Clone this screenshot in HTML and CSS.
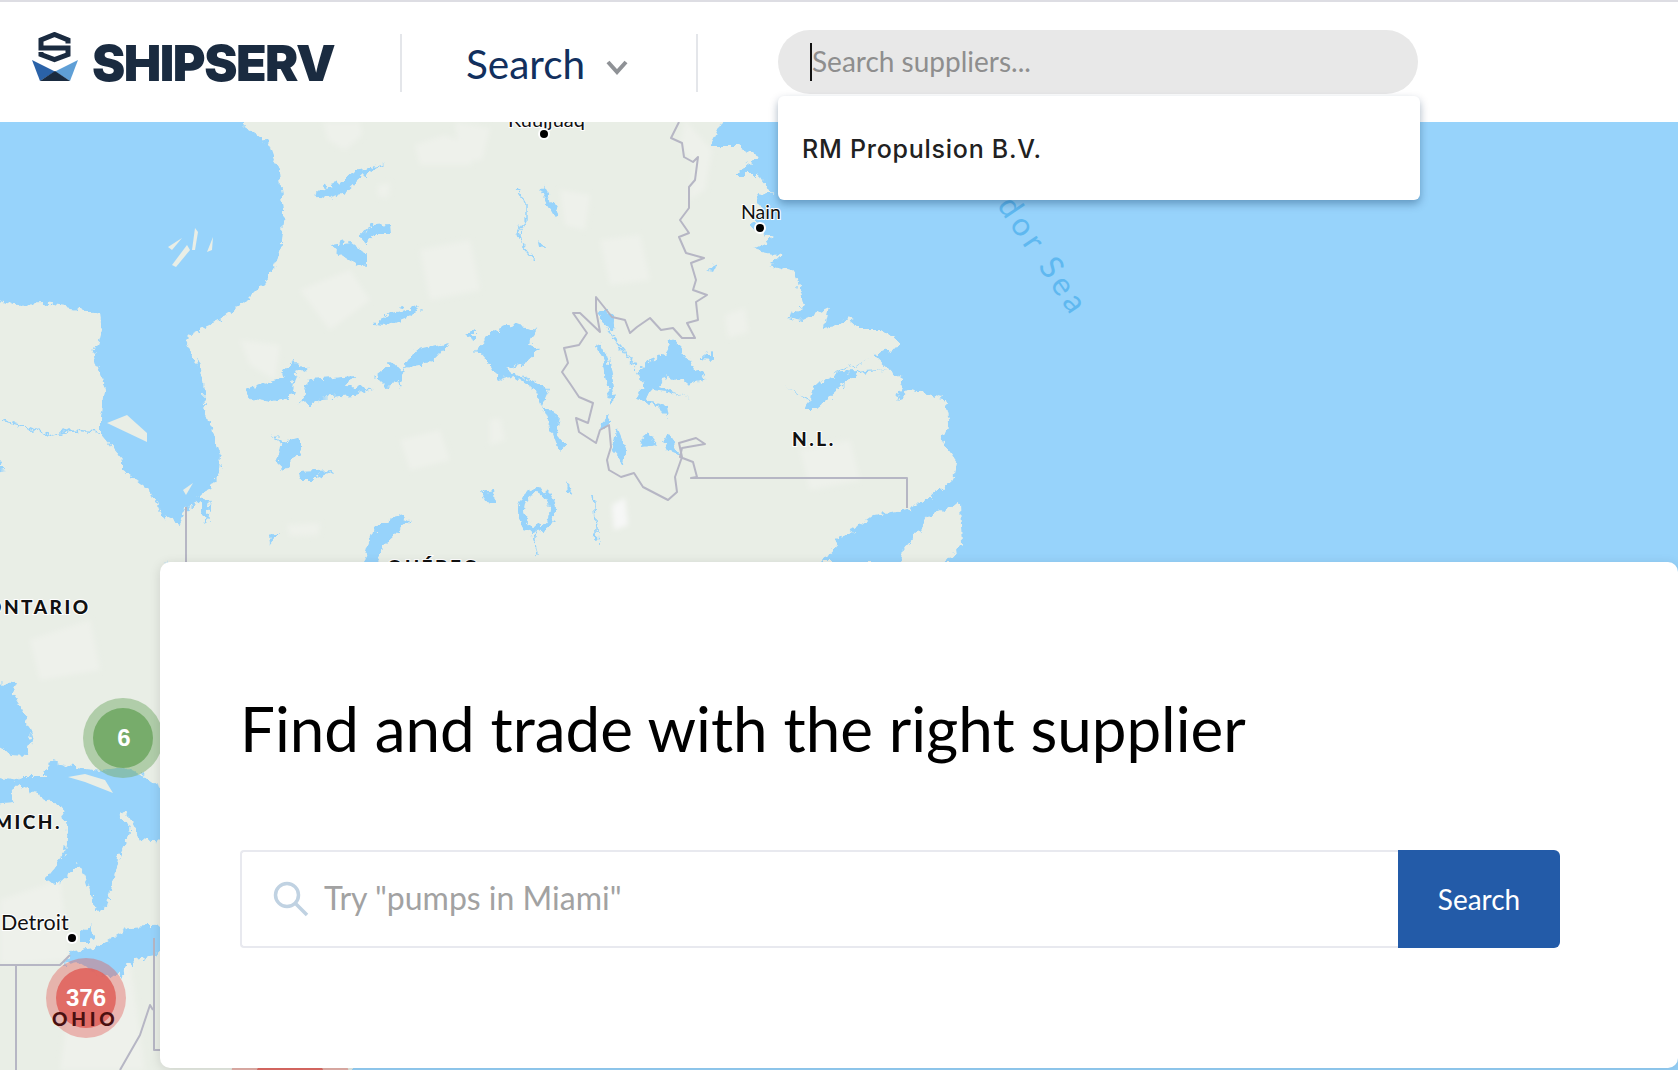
FILE: index.html
```html
<!DOCTYPE html>
<html lang="en">
<head>
<meta charset="utf-8">
<title>ShipServ</title>
<link rel="stylesheet" href="styles.css">
</head>
<body>
<div class="app">
  <header class="header">
    <a class="logo">
      <svg class="logo-mark" viewBox="0 0 46 50" width="46" height="50">
        <path class="lg-line" d="M36 11.500V8L22.500 2.500 9 8V16H36V22.500L22.500 27.500 9 22.500V20"/>
        <path class="lg-blue1" d="M0 28 23 39.500 8 49Z"/>
        <path class="lg-blue2" d="M46 28 23 39.500 38 49Z"/>
        <path class="lg-dark" d="M23 39 38 49H8Z"/>
      </svg>
      <span class="logo-text">SHIPSERV</span>
    </a>
    <div class="nav-cell">
      <span class="nav-label">Search</span>
      <svg class="chev" viewBox="0 0 22 16" width="22" height="16"><path d="M2 3 11 13 20 3"/></svg>
    </div>
    <div class="top-search">
      <div class="pill"><span class="caret"></span><span class="pill-text">Search suppliers...</span></div>
      <div class="dropdown"><span class="dropdown-item">RM Propulsion B.V.</span></div>
    </div>
  </header>
  <main class="stage">
    <svg class="map" viewBox="0 122 1678 948" width="1678" height="948">
      <defs>
        <filter id="rough" filterUnits="userSpaceOnUse" x="-30" y="90" width="1740" height="1010">
          <feTurbulence type="turbulence" baseFrequency="0.09" numOctaves="2" seed="4" result="n"/>
          <feDisplacementMap in="SourceGraphic" in2="n" scale="9" xChannelSelector="R" yChannelSelector="G"/>
        </filter>
        <filter id="soft" filterUnits="userSpaceOnUse" x="-30" y="90" width="1740" height="1010">
          <feGaussianBlur stdDeviation="2.500"/>
        </filter>
      </defs>
      <rect class="land" x="0" y="122" width="1678" height="948"/>
      <g class="patch">
        <path d="M323 122 360 122 362 135 345 150 328 140Z"/>
        <path d="M415 145 445 135 480 150 470 165 420 165Z"/>
        <path d="M455 122 490 128 482 160 460 160Z"/>
        <path d="M378 185 390 183 388 198 378 196Z"/>
        <path d="M287 525 320 523 318 535 290 536Z"/>
        <path d="M490 420 500 418 505 440 490 445Z"/>
        <path d="M725 315 745 308 748 332 728 338Z"/>
        <path d="M685 120 712 150 705 190 688 200 695 165 680 145Z"/>
        <path d="M240 340 280 345 275 380 250 365Z"/>
        <path d="M400 440 440 430 450 460 410 470Z"/>
        <path d="M560 190 590 195 585 230 565 225Z"/>
        <path d="M0 900 60 880 70 960 0 965Z"/>
        <path d="M70 1000 130 960 145 1070 60 1070Z"/>
        <path d="M300 290 350 270 370 300 330 330Z"/>
        <path d="M420 250 470 240 480 290 430 300Z"/>
        <path d="M600 240 640 235 650 280 610 285Z"/>
        <path d="M800 450 850 440 860 480 810 490Z"/>
        <path d="M30 640 90 620 100 670 40 680Z"/>
      </g>
      <path class="patch-bright" d="M612 505 625 498 628 525 614 530Z"/>
      <g class="water">
        <path d="M-20 100H240V122L253 130 267 142 277 170 282 210 278 250 263 280 243 300 217 318 187 332 182 337 188 350 200 367 203 403 210 430 218 453 217 470 207 487 195 493 208 498 205 522 197 500 185 507 177 522 158 513 150 490 120 467 120 457 98 430 98 417 102 387 92 353 99 327 97 312 83 308 43 302 10 303 -20 290Z"/>
        <path d="M729 100H1710V1095H350V1050H1000V562H818L843 533 871 513 907 507 936 490 950 477 954 460 945 447 939 437 948 417 943 397 925 392 907 387 900 395 895 397 904 377 886 367 871 353 896 347 896 338 879 327 854 327 846 313 835 325 820 327 825 306 800 318 784 315 802 303 798 290 793 270 768 263 779 253 750 247 771 237 746 223 760 212 754 190 770 193 757 173 732 173 757 153 736 143 707 143Z"/>
        <path d="M313 192 322 185 340 180 353 168 382 161 363 172 343 190 322 196Z"/>
        <path d="M356 233 370 223 388 222 389 232 373 232 363 241Z"/>
        <path d="M328 242 347 239 365 252 365 263 353 262 337 252Z"/>
        <path d="M373 322 387 310 420 305 413 312 385 323Z"/>
        <path d="M243 388 257 382 277 377 290 360 307 366 293 373 290 387 295 393 267 400 250 397Z"/>
        <path d="M298 402 307 377 330 375 353 373 343 385 370 386 350 393 318 396 307 403Z"/>
        <path d="M373 375 388 362 400 368 413 348 447 340 430 360 403 365 397 383 383 385Z"/>
        <path d="M463 333 472 327 472 338Z"/>
        <path d="M475 348 486 332 507 323 534 328 525 343 536 348 523 360 504 367 534 380 546 387 539 403 557 413 554 430 564 442 557 450 546 420 532 387 511 373 496 377 486 360Z"/>
        <path d="M272 432 280 440 298 435 298 450 283 467 275 460 278 443Z"/>
        <path d="M295 470 332 468 310 478 297 478Z"/>
        <path d="M478 490 492 488 493 503 487 503Z"/>
        <path d="M267 533 278 531 268 543Z"/>
        <path d="M358 570 370 530 393 512 408 518 383 540 370 570Z"/>
        <path d="M158 568 165 557 160 570Z"/>
        <path d="M-20 450 7 467 -20 470Z"/>
        <path d="M636 373 643 360 661 353 671 337 682 350 693 368 705 377 682 382 664 373 657 383 689 397 671 390 650 387 645 398 664 403 666 415 654 403 634 397 641 383Z"/>
        <path d="M698 357 711 348 711 358Z"/>
        <path d="M596 307 604 307 612 318 611 330 602 323Z"/>
        <path d="M598 420 609 410 604 428 597 428Z"/>
        <path d="M614 425 625 450 621 463 609 450Z"/>
        <path d="M637 437 645 430 655 443 640 445Z"/>
        <path d="M661 437 664 430 679 453 665 447Z"/>
        <path d="M704 267 714 262 711 268Z"/>
        <path d="M564 480 573 493 565 490Z"/>
        <path d="M534 237 543 247 535 246Z"/>
        <path d="M782 385 807 397 811 383 868 357 830 372 886 367 855 372 836 387 814 407 802 407 808 399Z"/>
        <path d="M-20 681 15 682 10 693 23 713 30 733 25 753 8 752 -20 737Z"/>
        <path d="M-20 773 17 778 20 773 43 773 48 760 73 765 100 768 123 765 147 777 170 793V840L140 837 127 813 117 809 128 830 117 853 113 867 103 907 93 908 85 880 77 863 53 883 43 875 63 850 65 827 60 807 30 790 17 783 7 790 12 800 -20 803Z"/>
        <path d="M60 963 70 950 90 947 127 925 170 923V950L133 957 117 975 97 973 77 960Z"/>
        <path d="M78 930 87 923 93 933 87 940 78 940Z"/>
        <path class="fine" d="M0 418 17 423 37 430 50 433 70 428 97 430"/>
        <path class="fine" d="M514 185 523 200 523 217 516 230 521 243 534 258"/>
        <path class="fine" d="M604 327 636 367"/>
        <path class="fine" d="M591 493 595 540"/>
        <path class="fine" d="M532 530 536 553"/>
        <path class="fine wide" d="M539 185 555 213"/>
        <path class="fine wide" d="M595 342 604 357 611 400"/>
        <ellipse class="ring" cx="534" cy="508" rx="16" ry="19"/>
      </g>
      <g class="isle">
        <path d="M107 423 127 415 147 433 147 442Z"/>
        <path d="M168 247 182 238 172 250Z"/>
        <path d="M172 265 187 245 190 250 176 267Z"/>
        <path d="M192 250 195 228 198 232 195 250Z"/>
        <path d="M207 252 213 237 212 250Z"/>
        <path d="M183 490 193 483 186 495Z"/>
        <path d="M68 777 85 782 113 793 105 780 85 774Z"/>
      </g>
      <g class="isle rough-land">
        <path d="M896 575 900 547 929 513 957 502 959 543 932 575Z"/>
      </g>
      <g class="border">
        <path d="M679 122 671 138 682 143 684 157 693 162 698 157 695 180 689 187 689 208 680 220 689 233 679 237 686 253 704 258 691 263 696 280 693 290 707 295 696 302 698 320 687 323 695 338 682 338 673 328 661 330 650 318 637 327 630 333 625 320 612 317 596 297 596 310 600 332 580 313 573 313 587 333 579 345 564 348 568 363 562 372 571 385 579 397 593 403 588 423 576 418 579 432 596 443 600 430 609 425 611 447 607 460 609 470 621 477 634 473 643 487 668 500 677 492 675 477 682 457 679 443 696 438 705 444 682 448 680 457 693 462 697 477 691 478H907V508"/>
        <path d="M186 507V562"/>
        <path d="M0 965H60L70 955M16 965V1070M154 938V1050H160M120 1070 140 1035 150 1005 153 1010"/>
      </g>
      <text class="sea" transform="translate(1073 319) rotate(56)">Labrador Sea</text>
      <text class="city" x="508" y="127">Kuujjuaq</text>
      <circle class="halo" cx="544" cy="134" r="6"/><circle class="dot" cx="544" cy="134" r="4"/>
      <text class="city nain" x="741" y="219">Nain</text>
      <circle class="halo" cx="760" cy="228" r="6"/><circle class="dot" cx="760" cy="228" r="4"/>
      <text class="city detroit" x="1" y="930">Detroit</text>
      <circle class="halo" cx="72" cy="938" r="6"/><circle class="dot" cx="72" cy="938" r="4"/>
      <text class="region" x="792" y="446">N.L.</text>
      <text class="region" x="387" y="574">QUÉBEC</text>
      <text class="region" x="-14" y="614">ONTARIO</text>
      <text class="region" x="-6" y="829">MICH.</text>
      <circle class="cl-g-o" cx="123" cy="738" r="40"/><circle class="cl-g-i" cx="123" cy="738" r="30"/>
      <text class="cl-t" x="124" y="746">6</text>
      <circle class="cl-r-o" cx="86" cy="998" r="40"/><circle class="cl-r-i" cx="86" cy="998" r="30"/>
      <circle class="cl-r-o" cx="290" cy="1084" r="60"/><circle class="cl-r-i" cx="290" cy="1084" r="36"/>
      <text class="cl-t" x="86" y="1006">376</text>
      <text class="region ohio" x="52" y="1026">OHIO</text>
    </svg>
    <section class="panel">
      <h1 class="title">Find and trade with the right supplier</h1>
      <div class="search-row">
        <div class="search-box">
          <svg class="mag" viewBox="0 0 36 36" width="36" height="36"><circle cx="14" cy="14" r="11.500"/><path d="M22.500 22.500 34 34"/></svg>
          <span class="placeholder">Try "pumps in Miami"</span>
        </div>
        <div class="search-btn">Search</div>
      </div>
    </section>
  </main>
</div>
</body>
</html>
```
FILE: styles.css
```css
* { box-sizing: border-box; }
html, body { margin: 0; height: 100%; overflow: hidden; background: #fff; }
.app { display: flex; flex-direction: column; width: 1678px; height: 1070px; font-family: Lato, "Liberation Sans", sans-serif; }
.header { position: relative; z-index: 3; display: flex; align-items: stretch; height: 122px; flex: none; border-top: 2px solid #dddde3; background: #fff; }
.logo { display: flex; align-items: flex-start; width: 400px; padding: 30px 0 0 32px; gap: 14px; }
.logo-mark { flex: none; }
.lg-line { fill: none; stroke: #1a2b40; stroke-width: 5; }
.lg-dark { fill: #1a2b40; }
.lg-blue1 { fill: #2a62a8; }
.lg-blue2 { fill: #5f9fd6; }
.logo-text { font-family: Inter, "Liberation Sans", sans-serif; font-weight: 900; font-size: 50px; line-height: 50px; margin-top: 6px; letter-spacing: -1.500px; color: #1a2b40; white-space: nowrap; }
.nav-cell { display: flex; align-items: center; gap: 21px; width: 298px; height: 58px; margin-top: 32px; padding-left: 64px; border-left: 2px solid #e4e6ea; border-right: 2px solid #e4e6ea; }
.nav-label { font-size: 40.500px; line-height: 58px; padding-top: 2px; color: #12305e; }
.chev { margin-top: 8px; }
.chev path { fill: none; stroke: #8f9296; stroke-width: 4; }
.top-search { position: relative; width: 642px; margin: 28px 0 0 80px; }
.pill { display: flex; align-items: center; width: 640px; height: 64px; padding-left: 32px; border-radius: 32px; background: #e8e8e8; }
.caret { width: 2px; height: 38px; background: #111; flex: none; }
.pill-text { font-size: 28px; line-height: 60px; height: 62px; color: #8e8e8e; }
.dropdown { position: absolute; left: 0; top: 66px; width: 642px; height: 104px; padding: 2px 0 0 24px; display: flex; align-items: center; border-radius: 6px; background: #fff; box-shadow: 0 4px 8px rgba(0,40,80,.35); }
.dropdown-item { font-family: Inter, sans-serif; font-weight: 500; font-size: 25px; letter-spacing: .75px; color: #212121; }
.stage { position: relative; flex: 1; overflow: hidden; padding: 440px 0 2px 160px; display: flex; background: #e9eee6; }
.map { position: absolute; left: 0; top: 0; display: block; }
.land { fill: #e9eee6; }
.patch { filter: url(#soft); }
.patch path { fill: #eef1eb; }
.patch-bright { fill: #f6f7f6; filter: url(#soft); }
.water { filter: url(#rough); }
.water path { fill: #97d3fb; }
.water .fine { fill: none; stroke: #97d3fb; stroke-width: 1.500; }
.water .fine.wide { stroke-width: 5; }
.ring { fill: none; stroke: #97d3fb; stroke-width: 6; }
.isle path { fill: #e9eee6; }
.rough-land { filter: url(#rough); }
.border path { fill: none; stroke: #b6b6c4; stroke-width: 2; stroke-linejoin: round; }
.sea { font-family: Lato, sans-serif; font-size: 32px; letter-spacing: 4.500px; fill: #5fb8f0; text-anchor: end; }
.city { font-family: Lato, sans-serif; font-size: 20px; fill: #111; paint-order: stroke; stroke: #fff; stroke-width: 2px; }
.nain { font-size: 19.500px; }
.detroit { font-size: 21.500px; }
.region { font-family: Lato, sans-serif; font-weight: 900; font-size: 19px; letter-spacing: 2.500px; fill: #111; paint-order: stroke; stroke: #fff; stroke-width: 2px; }
.ohio { stroke: none; fill: #4a1010; letter-spacing: 3.800px; }
.dot { fill: #000; }
.halo { fill: #fff; }
.cl-g-o { fill: rgba(119,172,107,.5); }
.cl-g-i { fill: #77ac6b; }
.cl-r-o { fill: rgba(224,90,84,.4); }
.cl-r-i { fill: rgba(224,100,94,.9); }
.cl-t { font-family: "Liberation Sans", sans-serif; font-weight: 700; font-size: 24px; fill: #fff; text-anchor: middle; }
.panel { position: relative; flex: 1; border-radius: 10px; background: #fff; padding: 126px 0 0 80px; box-shadow: 0 2px 12px rgba(0,0,0,.12); }
.title { margin: 0; font-weight: 400; font-size: 61.900px; line-height: 80px; color: #000; }
.search-row { display: flex; width: 1320px; height: 98px; margin-top: 82px; }
.search-box { flex: 1; display: flex; align-items: center; gap: 15px; padding: 0 0 0 31px; border: 2px solid #e8e9ef; border-right: 0; border-radius: 4px 0 0 4px; }
.mag circle, .mag path { fill: none; stroke: #c0d2e2; stroke-width: 3.500; }
.placeholder { font-size: 32px; padding-bottom: 3px; color: #a2a2a2; }
.search-btn { width: 162px; display: flex; align-items: center; justify-content: center; border-radius: 0 6px 6px 0; background: #235ba8; color: #fff; font-size: 28px; }
```
